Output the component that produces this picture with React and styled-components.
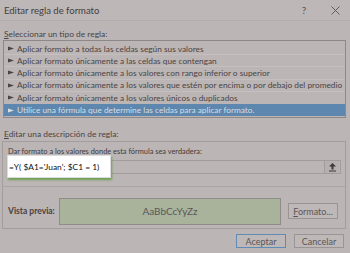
import React from "react";
import styled, { createGlobalStyle } from "styled-components";

const Global = createGlobalStyle`
  html, body { margin: 0; padding: 0; background: #bcb5b5; }
  * { box-sizing: border-box; }
`;

const Dialog = styled.div`
  width: 350px;
  height: 253px;
  background: #bcb5b5;
  font-family: Lato, "Noto Sans", sans-serif;
  font-size: 8.3px;
  color: #4a4444;
  display: flex;
  flex-direction: column;
  position: relative;
  overflow: hidden;
`;

const TitleBar = styled.div`
  height: 21px;
  display: flex;
  align-items: center;
  padding-left: 4px;
  border-bottom: 1px solid #b3acac;
  background: #beb7b7;
`;

const Title = styled.div`
  flex: 1;
  font-size: 9.5px;
  color: #433e3e;
`;

const TitleBtn = styled.div`
  width: ${(p) => p.w}px;
  margin-right: ${(p) => p.mr}px;
  display: flex;
  align-items: center;
  justify-content: center;
  font-size: 10px;
  color: #5a5454;
`;

const Body = styled.div`
  padding: 0 4px 0 3px;
  display: flex;
  flex-direction: column;
`;

const Label = styled.div`
  height: ${(p) => p.h}px;
  display: flex;
  align-items: flex-end;
  padding-left: 1px;
  padding-bottom: 1px;
  font-size: 8.4px;
  u { text-decoration: underline; }
`;

const ListBox = styled.div`
  border: 1px solid #8e8888;
  padding: 2px 0 1px 0;
  display: flex;
  flex-direction: column;
  overflow: hidden;
`;

const Row = styled.div`
  height: 12.2px;
  display: flex;
  align-items: center;
  padding-left: 4px;
  white-space: nowrap;
  background: ${(p) => (p.sel ? "#5d87ae" : "transparent")};
  color: ${(p) => (p.sel ? "#d9dde2" : "#4a4444")};
  border-bottom: ${(p) => (p.last || p.sel ? "none" : "1px solid #c5bfbf")};
`;

const Arrow = styled.svg`
  width: 6px;
  height: 5px;
  margin-right: 3px;
  flex: none;
`;

const Group = styled.div`
  margin-top: 1px;
  margin-left: -1px;
  border: 1px solid #a39d9d;
  display: flex;
  flex-direction: column;
  height: 88px;
`;

const GroupTop = styled.div`
  padding: 3px 4px 0 4px;
  border-bottom: 1px solid #aaa4a4;
  height: 45px;
`;

const FieldLabel = styled.div`
  height: 13px;
  display: flex;
  align-items: center;
  padding-left: 1px;
  font-size: 7.4px;
  color: #403a3a;
`;

const InputRow = styled.div`
  margin-top: 2px;
  height: 14px;
  display: flex;
  border: 1px solid #a29c9c;
  position: relative;
`;

const InputField = styled.div`
  flex: 1;
`;

const UploadBtn = styled.div`
  width: 15px;
  height: 12px;
  margin-right: 1px;
  border-left: 1px solid #a29c9c;
  background: #b7b0b0;
  display: flex;
  align-items: center;
  justify-content: center;
`;

const Highlight = styled.div`
  position: absolute;
  left: -1px;
  top: -6px;
  width: 104px;
  height: 23px;
  background: #ffffff;
  border: 1px solid #dcdcdc;
  box-shadow: 1px 2px 2px 0px #6f9f52;
  display: flex;
  align-items: center;
  padding-left: 1px;
  font-size: 8.4px;
  color: #111;
  white-space: nowrap;
`;

const PreviewRow = styled.div`
  flex: 1;
  display: flex;
  align-items: center;
  padding: 7px 6px 0 5px;
`;

const PreviewLabel = styled.div`
  width: 51px;
  font-weight: bold;
  font-size: 8.5px;
  color: #474141;
  white-space: nowrap;
`;

const PreviewBox = styled.div`
  width: 222px;
  height: 27px;
  background: #a9b39c;
  border: 1px solid #8f8d88;
  display: flex;
  align-items: center;
  justify-content: center;
  font-size: 10px;
  color: #5a5858;
`;

const Btn = styled.div`
  width: ${(p) => p.w}px;
  height: ${(p) => p.h}px;
  border: 1px solid ${(p) => (p.primary ? "#5f8bb5" : "#9a9494")};
  background: #beb8b8;
  display: flex;
  align-items: center;
  justify-content: center;
  color: #5c5656;
  font-size: 9px;
  margin-left: ${(p) => p.ml || 0}px;
  u { text-decoration: underline; }
`;

const Footer = styled.div`
  display: flex;
  justify-content: flex-end;
  padding: 5px 2px 0 0;
`;

const Grip = styled.div`
  position: absolute;
  right: 1px;
  bottom: 1px;
  width: 4px;
  height: 4px;
  background-image: radial-gradient(#8d8787 40%, transparent 45%);
  background-size: 2px 2px;
`;

const rows = [
  "Aplicar formato a todas las celdas según sus valores",
  "Aplicar formato únicamente a las celdas que contengan",
  "Aplicar formato únicamente a los valores con rango inferior o superior",
  "Aplicar formato únicamente a los valores que estén por encima o por debajo del promedio",
  "Aplicar formato únicamente a los valores únicos o duplicados",
  "Utilice una fórmula que determine las celdas para aplicar formato.",
];

export default function App() {
  return (
    <>
      <Global />
      <Dialog>
        <TitleBar>
          <Title>Editar regla de formato</Title>
          <TitleBtn w={20} mr={11}>?</TitleBtn>
          <TitleBtn w={20} mr={5}>
            <svg width="9" height="9" viewBox="0 0 9 9">
              <path d="M0.5 0.5 L8.5 8.5 M8.5 0.5 L0.5 8.5" stroke="#5a5454" strokeWidth="0.9" />
            </svg>
          </TitleBtn>
        </TitleBar>
        <Body>
          <Label h={19}>
            <span><u>S</u>eleccionar un tipo de regla:</span>
          </Label>
          <ListBox>
            {rows.map((r, i) => (
              <Row key={i} sel={i === 5} last={i === 4}>
                <Arrow viewBox="0 0 6 5">
                  <path d="M0 0.5 L6 2.5 L0 4.5 Z" fill={i === 5 ? "#d9dde2" : "#4a4444"} />
                </Arrow>
                {r}
              </Row>
            ))}
          </ListBox>
          <Label h={22}>
            <span><u>E</u>ditar una descripción de regla:</span>
          </Label>
          <Group>
            <GroupTop>
              <FieldLabel>Dar formato a los valores donde esta fórmula sea verdadera:</FieldLabel>
              <InputRow>
                <InputField />
                <UploadBtn>
                  <svg width="9" height="10" viewBox="0 0 9 10">
                    <path d="M4.5 1 L8 4.5 H5.5 V7.5 H3.5 V4.5 H1 Z" fill="#3d3838" />
                    <rect x="1" y="8.5" width="7" height="1" fill="#3d3838" />
                  </svg>
                </UploadBtn>
                <Highlight>=Y( $A1='Juan'; $C1 = 1)</Highlight>
              </InputRow>
            </GroupTop>
            <PreviewRow>
              <PreviewLabel>Vista previa:</PreviewLabel>
              <PreviewBox>AaBbCcYyZz</PreviewBox>
              <Btn w={50} h={16} ml={7}>
                <span><u>F</u>ormato...</span>
              </Btn>
            </PreviewRow>
          </Group>
          <Footer>
            <Btn w={50} h={14} primary>Aceptar</Btn>
            <Btn w={50} h={14} ml={8}>Cancelar</Btn>
          </Footer>
        </Body>
        <Grip />
      </Dialog>
    </>
  );
}
